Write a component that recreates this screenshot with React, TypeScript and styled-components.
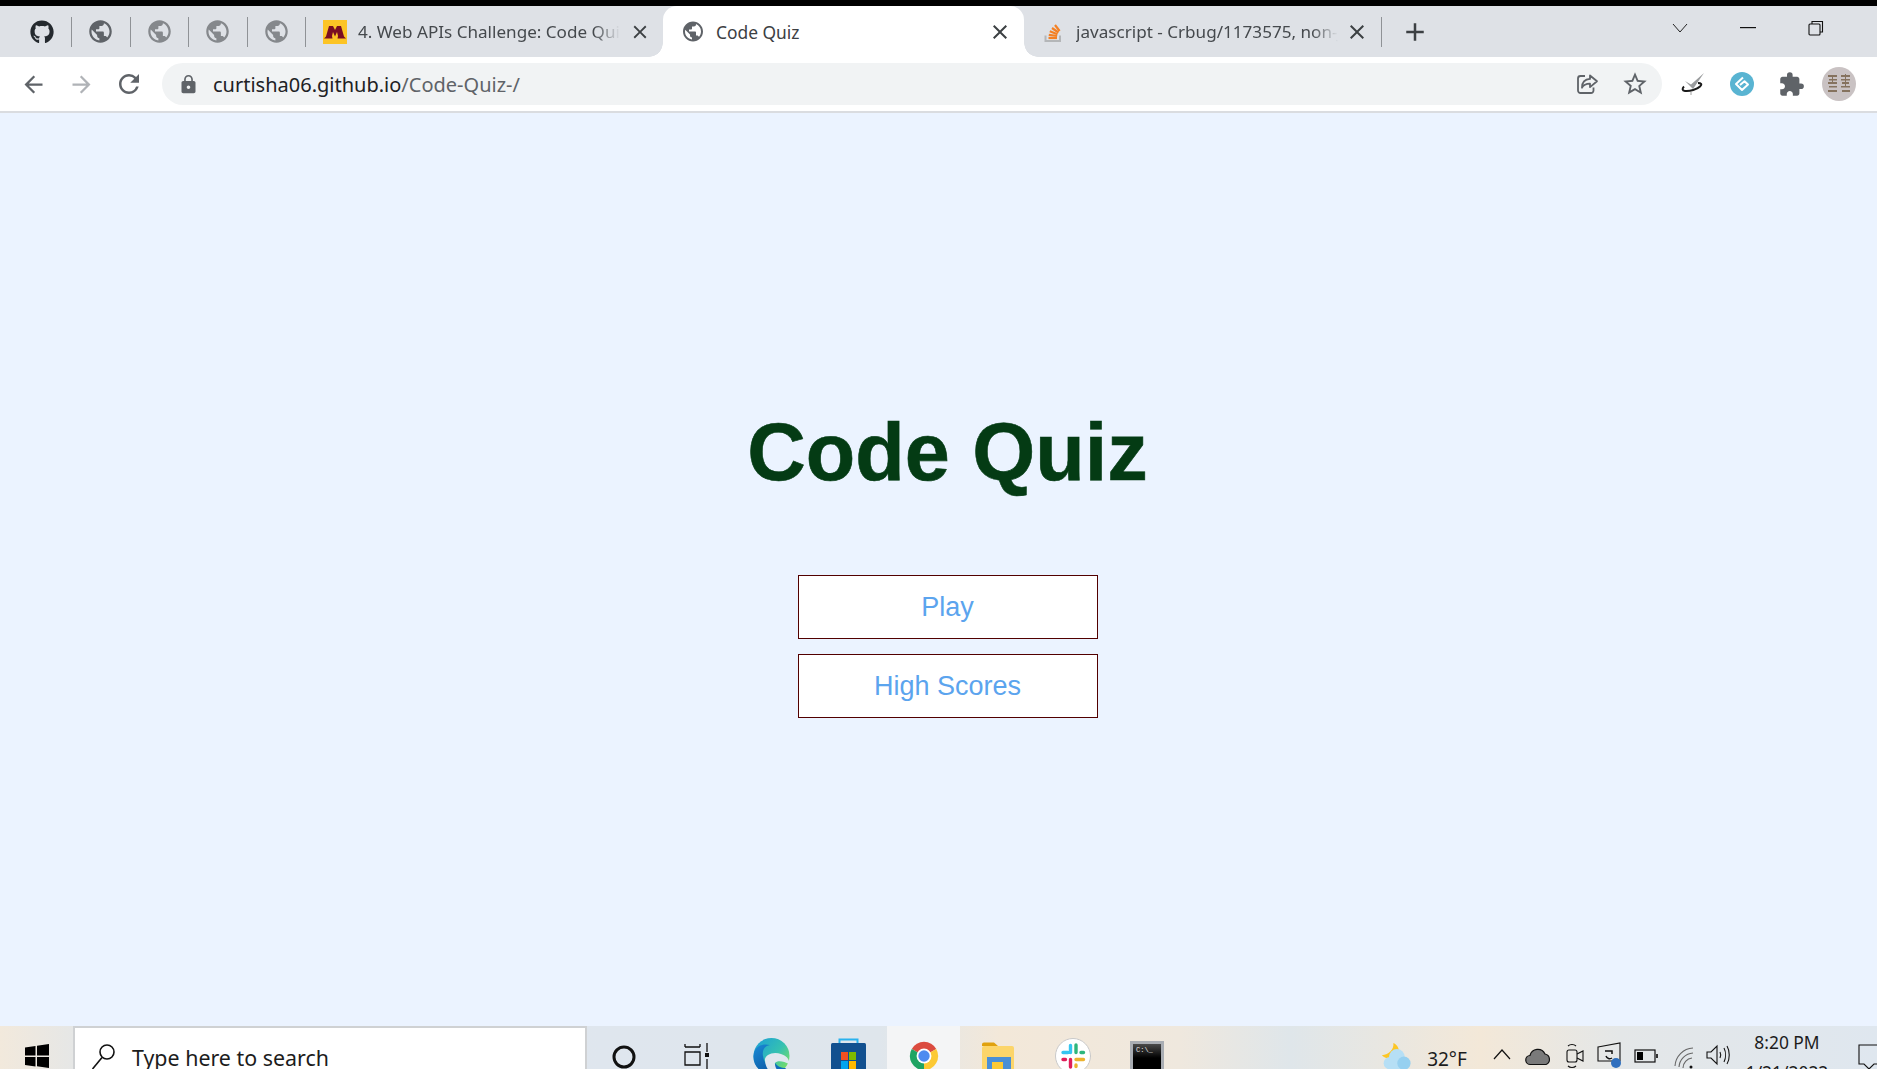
import styled, { createGlobalStyle } from 'styled-components';
import { FaGithub } from 'react-icons/fa';
import { MdPublic, MdArrowBack, MdArrowForward, MdRefresh, MdLock, MdStarBorder, MdExtension, MdClose, MdAdd } from 'react-icons/md';

const GlobalStyle = createGlobalStyle`
  html, body { margin: 0; padding: 0; height: 100%; overflow: hidden; background: #000; }
  * { box-sizing: border-box; }
  #root { height: 100%; }
`;

const uiFont = `"Noto Sans", "Open Sans", sans-serif`;

// --- Shell ---
const Screen = styled.div`
  width: 1877px;
  height: 1069px;
  display: flex;
  flex-direction: column;
  overflow: hidden;
  padding-top: 6px;
  background: #000;
  font-family: ${uiFont};
`;

// --- Tab strip ---
const TabStrip = styled.div`
  height: 51px;
  flex: none;
  display: flex;
  align-items: stretch;
  padding-left: 13px;
  background: #dee1e6;
`;

const PinnedTab = styled.div<{ $w: number; $faded?: boolean; $dark?: boolean }>`
  width: ${({ $w }) => $w}px;
  display: flex;
  align-items: center;
  justify-content: center;
  color: ${({ $faded, $dark }) => ($dark ? '#24292e' : $faded ? '#85888c' : '#5f6368')};
`;

const PinnedGroup = styled.div`
  display: flex;
`;

const Separator = styled.div`
  width: 1px;
  height: 30px;
  margin: 11px 0 0;
  background: #8f9296;
  flex: none;
`;

const Tab = styled.div<{ $w: number; $active?: boolean }>`
  position: relative;
  width: ${({ $w }) => $w}px;
  flex: none;
  display: flex;
  align-items: center;
  padding: ${({ $active }) => ($active ? '0 12px 0 18px' : '0 12px 0 17px')};
  border-radius: 14px 14px 0 0;
  background: ${({ $active }) => ($active ? '#fff' : 'transparent')};
  ${({ $active }) =>
    $active &&
    `
    &::before, &::after {
      content: '';
      position: absolute;
      bottom: 0;
      width: 14px;
      height: 14px;
    }
    &::before { left: -14px; background: radial-gradient(circle at 0 0, transparent 13.5px, #fff 14px); }
    &::after { right: -14px; background: radial-gradient(circle at 100% 0, transparent 13.5px, #fff 14px); }
  `}
`;

const Favicon = styled.span<{ $w?: number }>`
  width: ${({ $w }) => $w ?? 24}px;
  height: 24px;
  flex: none;
  display: flex;
  align-items: center;
  justify-content: center;
  color: #5f6368;
`;

const TabTitle = styled.span<{ $fade?: boolean; $active?: boolean; $w: number }>`
  width: ${({ $w }) => $w}px;
  margin-left: 11px;
  flex: none;
  overflow: hidden;
  white-space: nowrap;
  font-size: ${({ $active }) => ($active ? 17.4 : 17.1)}px;
  color: ${({ $active }) => ($active ? '#3c4043' : '#45494d')};
  ${({ $fade }) => $fade && `mask-image: linear-gradient(90deg, #000 90%, transparent 100%);`}
`;

const TabClose = styled.span`
  margin-left: auto;
  display: flex;
  color: #3c4043;
`;

const NewTab = styled.div`
  width: 66px;
  display: flex;
  align-items: center;
  justify-content: center;
  color: #3c4043;
`;

const WindowControls = styled.div`
  margin-left: auto;
  display: flex;
  align-self: flex-start;
  height: 44px;
  padding-right: 27px;
`;

const WindowButton = styled.div`
  width: 68px;
  display: flex;
  align-items: center;
  justify-content: center;
`;

// --- Toolbar ---
const Toolbar = styled.div`
  height: 56px;
  flex: none;
  display: flex;
  align-items: flex-start;
  padding: 6px 0 0 9px;
  background: #fff;
  border-bottom: 2px solid #dadce0;
`;

const NavButton = styled.div<{ $color?: string; $w?: number }>`
  width: ${({ $w }) => $w ?? 48}px;
  height: 42px;
  flex: none;
  display: flex;
  align-items: center;
  justify-content: center;
  color: ${({ $color }) => $color ?? '#5f6368'};
`;

const Omnibox = styled.div`
  width: 1500px;
  height: 42px;
  margin: 0 7px 0 9px;
  flex: none;
  display: flex;
  align-items: center;
  padding-left: 16px;
  border-radius: 21px;
  background: #f1f3f4;
  color: #5f6368;
`;

const Url = styled.span`
  margin-left: 14px;
  font-size: 20px;
  color: #5f6368;
  white-space: nowrap;
`;

const UrlHost = styled.span`
  color: #202124;
`;

const OmniActions = styled.div`
  margin-left: auto;
  display: flex;
  padding-right: 3px;
`;

// --- Page ---
const Page = styled.main`
  flex: 1;
  min-height: 0;
  display: flex;
  flex-direction: column;
  align-items: center;
  padding: 293px 0 0 18px;
  background: #ebf3ff;
  font-family: "Liberation Sans", Arial, sans-serif;
`;

const Title = styled.h1`
  margin: 0 0 77px;
  font-size: 81px;
  line-height: 92px;
  font-weight: 700;
  color: #043b14;
  -webkit-text-stroke: 0.6px #043b14;
`;

const MenuButton = styled.button`
  width: 300px;
  height: 64px;
  margin-bottom: 15px;
  display: block;
  border: 1px solid #520000;
  border-radius: 0;
  background: #fff;
  color: #5ba4ee;
  font-family: inherit;
  font-size: 27px;
`;

// --- Taskbar ---
const Taskbar = styled.footer`
  height: 43px;
  flex: none;
  display: flex;
  align-items: flex-start;
  overflow: hidden;
  background: linear-gradient(
    90deg,
    #f2e9dc 0,
    #e6e7e6 72px,
    #dfe6ee 600px,
    #dfe6ec 880px,
    #f3e8d9 1000px,
    #efe8de 1180px,
    #dfe6ea 1290px,
    #f3e8d8 1480px,
    #e4e7e8 1620px,
    #dfe7ef 1877px
  );
`;

const Slot = styled.div<{ $w: number; $top?: number; $active?: boolean }>`
  width: ${({ $w }) => $w}px;
  height: 43px;
  flex: none;
  display: flex;
  justify-content: center;
  align-items: flex-start;
  padding-top: ${({ $top }) => $top ?? 12}px;
  background: ${({ $active }) => ($active ? '#f4f5f6' : 'transparent')};
`;

const SearchBox = styled.div`
  width: 514px;
  height: 43px;
  flex: none;
  display: flex;
  align-items: flex-start;
  padding: 14px 0 0 16px;
  background: #fff;
  border: 2px solid #cfd1d3;
  border-bottom: none;
`;

const SearchText = styled.span`
  margin-left: 15px;
  padding-top: 2px;
  font-size: 21.4px;
  line-height: 28px;
  color: #1c1c1c;
  white-space: nowrap;
`;

const Tray = styled.div`
  margin-left: auto;
  margin-right: -3px;
  display: flex;
`;

const Weather = styled.span`
  font-size: 19px;
  line-height: 26px;
  color: #1c1c1c;
  white-space: nowrap;
`;

const Clock = styled.div`
  width: 104px;
  margin-right: 19px;
  padding-top: 1px;
  text-align: center;
  font-size: 17.4px;
  line-height: 30px;
  color: #1c1c1c;
  white-space: nowrap;
`;

// --- Drawn icons ---
const MinnesotaIcon = () => (
  <svg width="24" height="24" viewBox="0 0 24 24">
    <rect width="24" height="24" fill="#fcc425" />
    <path d="M1 18.500L3 16.500 6 6h4l2 4 2-4h4l3 10.500 2 2h-8.500l.5-2.500-1-4-2 4.500-2-4.500-1 4 .5 2.500z" fill="#7a0d22" />
  </svg>
);

const StackIcon = () => (
  <svg width="20" height="24" viewBox="0 0 20 24" fill="none">
    <path d="M2.500 15.500v5.500h14.500v-5.500" stroke="#b4b6b8" strokeWidth="2" />
    <g stroke="#f48024" strokeWidth="2.200">
      <path d="M5.500 18h8.500" />
      <path d="M5.800 14.800l8.300 1.200" />
      <path d="M6.800 11.300l7.700 3" />
      <path d="M9 8l6.500 4.500" />
      <path d="M12 5l4.600 6" />
    </g>
  </svg>
);

const ShareIcon = () => (
  <svg width="24" height="24" viewBox="0 0 24 24" fill="none" stroke="#5f6368" strokeWidth="1.800" strokeLinejoin="round">
    <path d="M10 4H5.500A2.500 2.500 0 0 0 3 6.500v12A2.500 2.500 0 0 0 5.500 21h10.500a2.500 2.500 0 0 0 2.500-2.500v-3" />
    <path d="M15 3.500l7 5.800-7 5.800v-3.400c-4 0-6.500 1-8 4 0-5.500 2.500-8.500 8-8.800z" />
  </svg>
);

const CheckOrbitIcon = () => (
  <svg width="24" height="24" viewBox="0 0 24 24" fill="none">
    <path d="M4 9l6 3.500L23 1 12 17z" fill="#9a9c9e" />
    <path d="M17 11c3 0 4.500 1 2 3.500-3 3-10 5-15 4.500-3-.5-3-2.500-1-4.500" stroke="#1a1a1a" strokeWidth="2" />
    <path d="M10 20v3" stroke="#b5b5b5" strokeWidth="1.300" />
  </svg>
);

const TealBadgeIcon = () => (
  <svg width="24" height="24" viewBox="0 0 24 24" fill="none">
    <circle cx="12" cy="12" r="12" fill="#59b4d2" />
    <path d="M13 5.500L6 12l6 6 6-5.500-3.500-3.300L10 13" stroke="#fff" strokeWidth="2" strokeLinejoin="round" />
  </svg>
);

const AvatarIcon = () => (
  <svg width="34" height="34" viewBox="0 0 34 34">
    <circle cx="17" cy="17" r="17" fill="#c9c2c3" />
    <g fill="#85725e">
      <rect x="6" y="8" width="9" height="2" /><rect x="19" y="8" width="9" height="2" />
      <rect x="7" y="12" width="8" height="1.500" /><rect x="19" y="12" width="9" height="1.500" />
      <rect x="6" y="15" width="9" height="2" /><rect x="20" y="15" width="7" height="2" />
      <rect x="7" y="19" width="8" height="1.500" /><rect x="19" y="19" width="9" height="1.500" />
      <rect x="6" y="23" width="9" height="2" /><rect x="20" y="23" width="8" height="2" />
      <rect x="23" y="7" width="1" height="12" />
      <rect x="10" y="10" width="1" height="5" />
    </g>
  </svg>
);

const WindowsIcon = () => (
  <svg width="24" height="24" viewBox="0 0 24 24" fill="#000">
    <path d="M0 3.400L10.500 2v9.500H0zM12 1.800L24 0v11.500H12zM0 13h10.500v9.500L0 21zM12 13h12v11l-12-1.700z" />
  </svg>
);

const SearchGlassIcon = () => (
  <svg width="26" height="30" viewBox="0 0 26 30" fill="none" stroke="#111" strokeWidth="1.600">
    <circle cx="16" cy="10" r="7" />
    <path d="M11 15.500L1.500 27" />
  </svg>
);

const CortanaIcon = () => (
  <svg width="26" height="26" viewBox="0 0 26 26" fill="none">
    <circle cx="13" cy="13" r="10" stroke="#111" strokeWidth="3" />
  </svg>
);

const TaskViewIcon = () => (
  <svg width="26" height="28" viewBox="0 0 26 28" fill="none" stroke="#111" strokeWidth="1.300">
    <path d="M1 4V1M16 4V1M1 4h15M1 9h15v13H1zM1 27h15M23 0v9M23 16v12" />
    <rect x="21" y="10" width="4" height="4" fill="#111" stroke="none" />
  </svg>
);

const EdgeIcon = () => (
  <svg width="37" height="36" viewBox="0 0 37 36">
    <defs>
      <linearGradient id="edgeTop" x1="0" y1="0" x2="1" y2="0.800">
        <stop offset="0" stopColor="#1b9dd9" />
        <stop offset="0.600" stopColor="#35c1b1" />
        <stop offset="1" stopColor="#7fe05f" />
      </linearGradient>
      <linearGradient id="edgeBase" x1="0" y1="0" x2="0.600" y2="1">
        <stop offset="0" stopColor="#1a8bd6" />
        <stop offset="1" stopColor="#0c59a4" />
      </linearGradient>
    </defs>
    <circle cx="18.500" cy="18" r="18" fill="url(#edgeTop)" />
    <path d="M0.500 18C1 8 10 5 17 7c-6 1-8 6-7 11 1 7 6 14 14 18H18C8 36 0 28 0.500 18z" fill="url(#edgeBase)" />
    <path d="M12 23C11 17 20 13 28 16c6 2 9 6 8 10-5-3-12-4-14-1-1 3 4 6 11 6l-3 5H18C15 32 12.500 28 12 23z" fill="#e0e7ee" />
    <path d="M22 25c2 3 6 5 11 5l-3 4c-5 0-8-3-8-9z" fill="#0f6cbd" />
  </svg>
);

const StoreIcon = () => (
  <svg width="35" height="36" viewBox="0 0 35 36">
    <path d="M8.500 6V1.500h18V6" fill="none" stroke="#2ab2ee" strokeWidth="2" />
    <rect x="0" y="5" width="35" height="31" rx="1.500" fill="#12508f" />
    <rect x="10" y="14" width="7" height="8" fill="#f25022" />
    <rect x="18" y="14" width="7" height="8" fill="#7fba00" />
    <rect x="10" y="23" width="7" height="8" fill="#00a4ef" />
    <rect x="18" y="23" width="7" height="8" fill="#ffb900" />
  </svg>
);

const ChromeIcon = () => (
  <svg width="34" height="34" viewBox="0 0 48 48">
    <path d="M24 24L6.680 14A20 20 0 0 1 41.320 14z" fill="#db4b3f" />
    <path d="M24 24L41.320 14A20 20 0 0 1 24 44z" fill="#fcc934" />
    <path d="M24 24L24 44A20 20 0 0 1 6.680 14z" fill="#1fa463" />
    <circle cx="24" cy="24" r="10.500" fill="#fff" />
    <circle cx="24" cy="24" r="8" fill="#4f8bf0" />
  </svg>
);

const FolderIcon = () => (
  <svg width="32" height="36" viewBox="0 0 32 36">
    <path d="M0 2.500A2 2 0 0 1 2 .500h10l4 3.500H0z" fill="#e0a10e" />
    <rect x="0" y="4" width="32" height="32" rx="2" fill="#fcd56a" />
    <rect x="5" y="15" width="24" height="21" fill="#4a8fd6" />
    <rect x="10" y="20" width="11" height="16" fill="#fcc934" />
  </svg>
);

const SlackIcon = () => (
  <svg width="36" height="36" viewBox="0 0 36 36" fill="none" strokeWidth="3.400" strokeLinecap="round">
    <circle cx="18" cy="18" r="17.500" fill="#fff" stroke="#c9c9c9" strokeWidth="1" />
    <path d="M15.500 7.500v7M8 14.500h5" stroke="#36c5f0" />
    <path d="M21 7v7.500M26 14.500h2.500" stroke="#2eb67d" />
    <path d="M21 21.500h7.500M21 27v1.500" stroke="#ecb22e" />
    <path d="M15.500 21.500v7.500M8 21.500h2.500" stroke="#e01e5a" />
  </svg>
);

const ConsoleGlyph = styled.div`
  width: 34px;
  height: 36px;
  padding: 3px 3px 0;
  background: #a9adb3;
`;

const ConsoleScreen = styled.div`
  height: 36px;
  padding: 2px 0 0 3px;
  background: linear-gradient(180deg, #4a4a4a 0, #000 14px);
  color: #e8e8e8;
  font: 7px "Liberation Mono", monospace;
`;

const MoonCloudIcon = () => (
  <svg width="34" height="34" viewBox="0 0 34 34">
    <path d="M14 1C15 8 9 14 1 15c5 5 14 5 18-1 3-5 0-11-5-13z" fill="#fcc625" />
    <g fill="#b6dff5">
      <circle cx="10" cy="24" r="7" />
      <circle cx="18" cy="17" r="9" />
      <rect x="10" y="20" width="16" height="12" />
    </g>
    <circle cx="26" cy="24" r="7.500" fill="#96d0f0" />
  </svg>
);

const OneDriveIcon = () => (
  <svg width="26" height="20" viewBox="0 0 26 20" fill="#7a7a7a" stroke="#111" strokeWidth="1.200">
    <path d="M5.500 18.500a4.500 4.500 0 0 1-.5-9 8 8 0 0 1 15-1.500 5.500 5.500 0 0 1 1 10.500z" />
  </svg>
);

const MeetIcon = () => (
  <svg width="18" height="28" viewBox="0 0 18 28" fill="none" stroke="#111" strokeWidth="1.100">
    <rect x="1" y="8" width="10" height="12" rx="2" />
    <path d="M11 12l6-3v10l-6-3M2 4c2-2 6-2 8 0M2 24c2 2 6 2 8 0" />
  </svg>
);

const SyncIcon = () => (
  <svg width="26" height="28" viewBox="0 0 26 28" fill="none" stroke="#111" strokeWidth="1.100">
    <path d="M1 5l22-4v18H1z" />
    <path d="M8 9h7v3M9 14a4 4 0 0 0 6 2" strokeWidth="1.500" />
    <circle cx="19" cy="21" r="5" fill="#2f6fbe" stroke="none" />
  </svg>
);

const BatteryIcon = () => (
  <svg width="24" height="16" viewBox="0 0 24 16" fill="none">
    <rect x="1" y="2" width="20" height="12" stroke="#111" strokeWidth="1.200" />
    <rect x="3" y="4" width="6" height="8" fill="#000" />
    <rect x="22" y="6" width="2" height="4" fill="#333" />
  </svg>
);

const WifiIcon = () => (
  <svg width="20" height="24" viewBox="0 0 20 24" fill="none" stroke="#666" strokeWidth="1.100">
    <path d="M1 20A19 19 0 0 1 19 2M5 21A15 15 0 0 1 19 7M9 22a10 10 0 0 1 9-10" />
    <circle cx="17" cy="21" r="1.500" fill="#111" stroke="none" />
  </svg>
);

const SoundIcon = () => (
  <svg width="24" height="24" viewBox="0 0 24 24" fill="none" stroke="#111" strokeWidth="1.100">
    <path d="M1 9h4l6-6v18l-6-6H1z" />
    <path d="M14 9c1 2 1 4 0 6M18 5c2 4 2 10 0 14M21 3c3 5 3 13 0 18" />
  </svg>
);

const NotifyIcon = () => (
  <svg width="22" height="28" viewBox="0 0 22 28" fill="none" stroke="#111" strokeWidth="1.100">
    <path d="M1 1h20v19h-5l-5 5-5-5H1z" />
  </svg>
);

const Chevron = () => (
  <svg width="16" height="10" viewBox="0 0 16 10" fill="none" stroke="#222" strokeWidth="1">
    <path d="M1 1l7 8 7-8" />
  </svg>
);

const Minimize = () => (
  <svg width="16" height="2" viewBox="0 0 16 2"><rect width="16" height="1.200" fill="#111" /></svg>
);

const Restore = () => (
  <svg width="16" height="16" viewBox="0 0 16 16" fill="none" stroke="#111" strokeWidth="1.100">
    <rect x="1" y="4" width="11" height="11" rx="1" />
    <path d="M4 4V1.500h10.500V12H12" />
  </svg>
);

const pinned = [
  { key: 'a', faded: false },
  { key: 'b', faded: true },
  { key: 'c', faded: true },
  { key: 'd', faded: true },
];

export default function App() {
  return (
    <Screen>
      <GlobalStyle />
      <TabStrip>
        <PinnedTab $w={58} $dark>
          <FaGithub size={24} />
        </PinnedTab>
        <Separator />
        {pinned.map(p => (
          <PinnedGroup key={p.key}>
            <PinnedTab $w={57.5} $faded={p.faded}>
              <MdPublic size={27} />
            </PinnedTab>
            <Separator />
          </PinnedGroup>
        ))}
        <Tab $w={357}>
          <MinnesotaIcon />
          <TabTitle $w={262} $fade>4. Web APIs Challenge: Code Quiz</TabTitle>
          <TabClose><MdClose size={22} /></TabClose>
        </Tab>
        <Tab $w={361} $active>
          <Favicon><MdPublic size={27} /></Favicon>
          <TabTitle $w={200} $active>Code Quiz</TabTitle>
          <TabClose><MdClose size={24} /></TabClose>
        </Tab>
        <Tab $w={357}>
          <Favicon><StackIcon /></Favicon>
          <TabTitle $w={262} $fade>javascript - Crbug/1173575, non-JS</TabTitle>
          <TabClose><MdClose size={24} /></TabClose>
        </Tab>
        <Separator />
        <NewTab><MdAdd size={30} /></NewTab>
        <WindowControls>
          <WindowButton><Chevron /></WindowButton>
          <WindowButton><Minimize /></WindowButton>
          <WindowButton><Restore /></WindowButton>
        </WindowControls>
      </TabStrip>

      <Toolbar>
        <NavButton><MdArrowBack size={27} /></NavButton>
        <NavButton $color="#b0b3b7"><MdArrowForward size={27} /></NavButton>
        <NavButton><MdRefresh size={30} /></NavButton>
        <Omnibox>
          <MdLock size={21} />
          <Url><UrlHost>curtisha06.github.io</UrlHost>/Code-Quiz-/</Url>
          <OmniActions>
            <NavButton><ShareIcon /></NavButton>
            <NavButton><MdStarBorder size={28} /></NavButton>
          </OmniActions>
        </Omnibox>
        <NavButton><CheckOrbitIcon /></NavButton>
        <NavButton $w={50}><TealBadgeIcon /></NavButton>
        <NavButton><MdExtension size={27} /></NavButton>
        <NavButton><AvatarIcon /></NavButton>
      </Toolbar>

      <Page>
        <Title>Code Quiz</Title>
        <MenuButton>Play</MenuButton>
        <MenuButton>High Scores</MenuButton>
      </Page>

      <Taskbar>
        <Slot $w={73} $top={18}><WindowsIcon /></Slot>
        <SearchBox>
          <SearchGlassIcon />
          <SearchText>Type here to search</SearchText>
        </SearchBox>
        <Slot $w={73} $top={18}><CortanaIcon /></Slot>
        <Slot $w={73} $top={17}><TaskViewIcon /></Slot>
        <Slot $w={77}><EdgeIcon /></Slot>
        <Slot $w={77}><StoreIcon /></Slot>
        <Slot $w={73} $active $top={13}><ChromeIcon /></Slot>
        <Slot $w={76} $top={16}><FolderIcon /></Slot>
        <Slot $w={74} $top={12}><SlackIcon /></Slot>
        <Slot $w={74} $top={15}>
          <ConsoleGlyph><ConsoleScreen>C:\_</ConsoleScreen></ConsoleGlyph>
        </Slot>
        <Tray>
          <Slot $w={30} $top={14}><MoonCloudIcon /></Slot>
          <Slot $w={72} $top={20}><Weather>32°F</Weather></Slot>
          <Slot $w={38} $top={22}>
            <svg width="18" height="12" viewBox="0 0 18 12" fill="none" stroke="#111" strokeWidth="1.200"><path d="M1 11l8-9 8 9" /></svg>
          </Slot>
          <Slot $w={34} $top={20}><OneDriveIcon /></Slot>
          <Slot $w={40} $top={16}><MeetIcon /></Slot>
          <Slot $w={30} $top={16}><SyncIcon /></Slot>
          <Slot $w={42} $top={22}><BatteryIcon /></Slot>
          <Slot $w={34} $top={20}><WifiIcon /></Slot>
          <Slot $w={34} $top={17}><SoundIcon /></Slot>
          <Clock>8:20 PM<br />1/21/2022</Clock>
          <Slot $w={22} $top={18}><NotifyIcon /></Slot>
        </Tray>
      </Taskbar>
    </Screen>
  );
}
